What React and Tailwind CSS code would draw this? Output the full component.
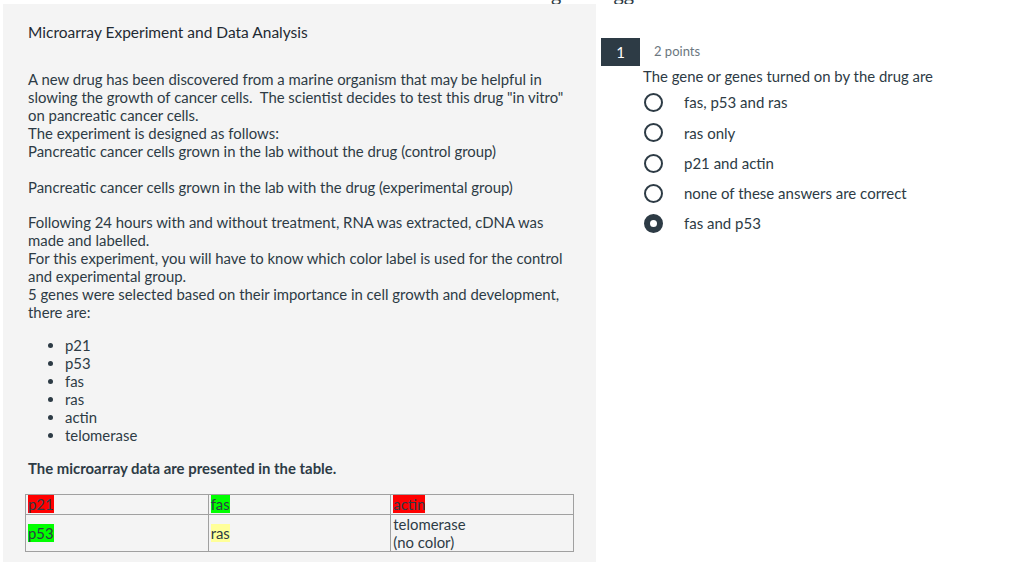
import React from 'react';

const font = { fontFamily: 'Lato, "Noto Sans", sans-serif' };

const options = [
  { label: 'fas, p53 and ras', checked: false },
  { label: 'ras only', checked: false },
  { label: 'p21 and actin', checked: false },
  { label: 'none of these answers are correct', checked: false },
  { label: 'fas and p53', checked: true },
];

const genes = ['p21', 'p53', 'fas', 'ras', 'actin', 'telomerase'];

function Radio({ checked }) {
  return (
    <span
      className={
        'block w-[19px] h-[19px] rounded-full border-[#2d3b45] shrink-0 ' +
        (checked ? 'border-[6px]' : 'border-2')
      }
    />
  );
}

export default function App() {
  return (
    <div className="w-[1024px] h-[565px] bg-white overflow-hidden text-[#2d3b45]" style={font}>
      {/* cut-off text from the question above */}
      <div className="h-[4px] overflow-hidden">
        <div className="-mt-[16px] flex text-[20px] leading-[20px] text-[#2d3b45]">
          <span className="ml-[551px]">g</span>
          <span className="ml-[52px]">gg</span>
        </div>
      </div>

      <div className="flex">
        {/* stimulus panel */}
        <div className="ml-[3px] w-[593px] h-[558px] bg-[#f4f4f4] pl-[25px] pt-[18px] text-[14.9px] leading-[18px]">
          <h2 className="text-[15.5px] leading-[20px] text-[#1f2a33]">Microarray Experiment and Data Analysis</h2>

          <p className="mt-[28px]">
            A new drug has been discovered from a marine organism that may be helpful in<br />
            slowing the growth of cancer cells.&nbsp; The scientist decides to test this drug "in vitro"<br />
            on pancreatic cancer cells.<br />
            The experiment is designed as follows:<br />
            Pancreatic cancer cells grown in the lab without the drug (control group)
          </p>
          <p className="mt-[18px]">Pancreatic cancer cells grown in the lab with the drug (experimental group)</p>
          <p className="mt-[17px]">
            Following 24 hours with and without treatment, RNA was extracted, cDNA was<br />
            made and labelled.<br />
            For this experiment, you will have to know which color label is used for the control<br />
            and experimental group.<br />
            5 genes were selected based on their importance in cell growth and development,<br />
            there are:
          </p>

          <ul className="mt-[15px] pl-[37px] list-disc">
            {genes.map((g) => (
              <li key={g}>{g}</li>
            ))}
          </ul>

          <p className="mt-[15px] font-bold">The microarray data are presented in the table.</p>

          <table className="mt-[17px] -ml-[3px] w-[549px] border-collapse border border-[#a0a0a0] table-fixed">
            <tbody>
              <tr className="h-[20px] align-top">
                <td className="border border-[#a0a0a0] px-[2px] leading-[18px]">
                  <span className="bg-[#ff0000]">p21</span>
                </td>
                <td className="border border-[#a0a0a0] px-[2px] leading-[18px]">
                  <span className="bg-[#00ff00]">fas</span>
                </td>
                <td className="border border-[#a0a0a0] px-[2px] leading-[18px]">
                  <span className="bg-[#ff0000]">actin</span>
                </td>
              </tr>
              <tr className="h-[37px]">
                <td className="border border-[#a0a0a0] px-[2px] leading-[18px]">
                  <span className="bg-[#00ff00]">p53</span>
                </td>
                <td className="border border-[#a0a0a0] px-[2px] leading-[18px]">
                  <span className="bg-[#ffff99]">ras</span>
                </td>
                <td className="border border-[#a0a0a0] px-[2px] leading-[18px]">
                  telomerase<br />(no color)
                </td>
              </tr>
            </tbody>
          </table>
        </div>

        {/* question */}
        <div className="ml-[5px] pt-[34px]">
          <div className="flex items-center">
            <div className="w-[39px] h-[28px] bg-[#2d3b45] text-white text-[15px] flex items-center justify-center">1</div>
            <span className="ml-[14px] text-[13px] text-[#6b7780]">2 points</span>
          </div>
          <div className="ml-[42px] mt-[1px]">
            <p className="text-[14.9px] leading-[18px]">The gene or genes turned on by the drug are</p>
            <div className="mt-[8px] flex flex-col gap-[11.25px] pl-[1px]">
              {options.map((o) => (
                <label key={o.label} className="flex items-center h-[19px] text-[15px]">
                  <Radio checked={o.checked} />
                  <span className="ml-[21px]">{o.label}</span>
                </label>
              ))}
            </div>
          </div>
        </div>
      </div>
    </div>
  );
}
